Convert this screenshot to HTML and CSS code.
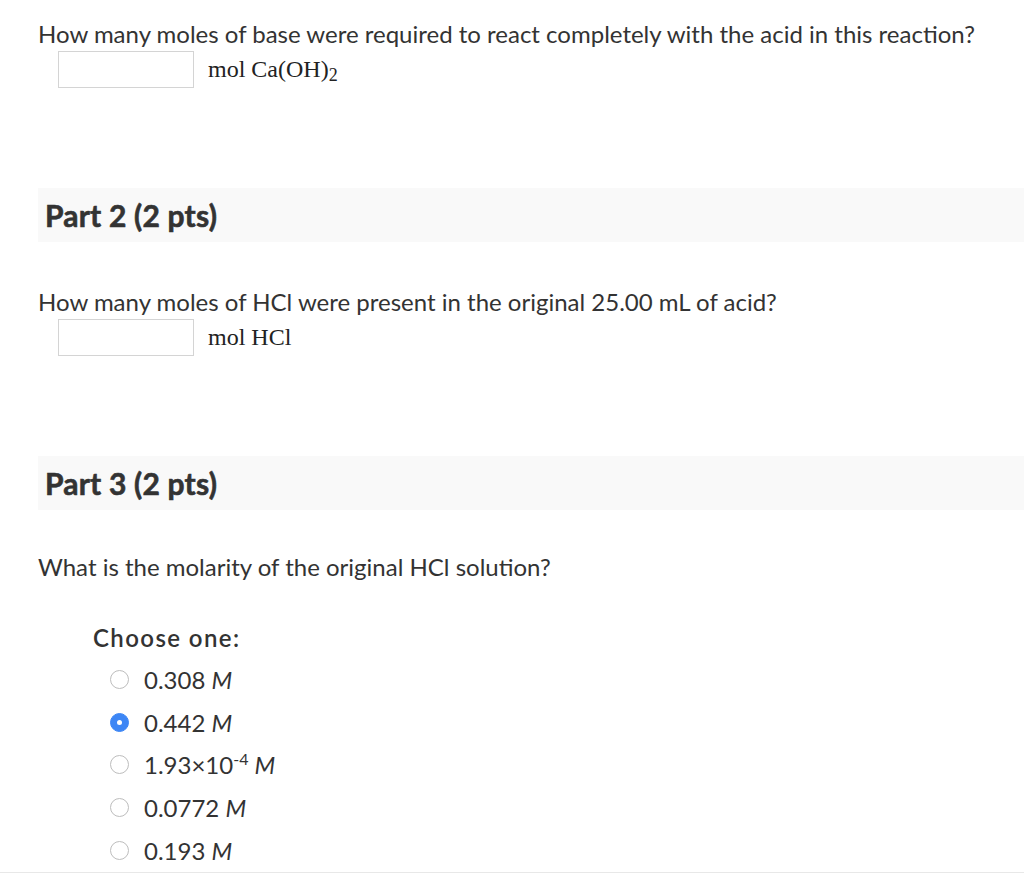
FILE: index.html
```html
<!DOCTYPE html>
<html>
<head>
<meta charset="utf-8">
<link rel="stylesheet" href="styles.css">
</head>
<body>
<div class="page">
  <p class="q q1">How many moles of base were required to react completely with the acid in this reaction?</p>
  <div class="answer">
    <span class="box"></span>
    <span class="unit">mol Ca(OH)<sub>2</sub></span>
  </div>

  <h2 class="part part2">Part 2 (2 pts)</h2>

  <p class="q q2">How many moles of HCl were present in the original 25.00 mL of acid?</p>
  <div class="answer">
    <span class="box"></span>
    <span class="unit">mol HCl</span>
  </div>

  <h2 class="part part3">Part 3 (2 pts)</h2>

  <p class="q q3">What is the molarity of the original HCl solution?</p>

  <div class="choices">
    <div class="choose">Choose one:</div>
    <div class="opt"><span class="radio"></span><span class="label">0.308 <i>M</i></span></div>
    <div class="opt"><span class="radio on"></span><span class="label">0.442 <i>M</i></span></div>
    <div class="opt"><span class="radio"></span><span class="label">1.93×10<sup>-4</sup> <i>M</i></span></div>
    <div class="opt"><span class="radio"></span><span class="label">0.0772 <i>M</i></span></div>
    <div class="opt"><span class="radio"></span><span class="label">0.193 <i>M</i></span></div>
  </div>
</div>
</body>
</html>
```
FILE: styles.css
```css
html, body {
  margin: 0;
  padding: 0;
  background: #fff;
}
.page {
  padding-left: 38px;
  font-family: Lato, "Open Sans", sans-serif;
  color: #333;
}
.q {
  margin: 0;
  font-size: 24px;
  line-height: 28px;
}
.q1 { margin-top: 20px; }
.q2 { margin-top: 46px; }
.q3 { margin-top: 43px; }
.answer {
  display: flex;
  align-items: center;
  margin-top: 3px;
  padding-left: 20px;
}
.box {
  width: 134px;
  height: 35px;
  border: 1px solid #d4d4d4;
  background: #fff;
}
.unit {
  margin-left: 14px;
  font-family: "Liberation Serif", serif;
  font-size: 24px;
  color: #222;
}
.unit sub {
  font-size: 18px;
  vertical-align: -4px;
  line-height: 0;
}
.part {
  margin: 100px 0 0 0;
  height: 54px;
  display: flex;
  align-items: center;
  padding-left: 7px;
  background: #f9f9f9;
  font-size: 30px;
  font-weight: 700;
  -webkit-text-stroke: 0.6px #333;
  letter-spacing: 0.2px;
  color: #333;
}
.choices {
  margin-top: 43px;
  border-bottom: 1px solid #e8e8e8;
  margin-left: -38px;
  padding-left: 93px;
}
.choose {
  font-size: 24px;
  line-height: 28px;
  font-weight: 600;
  letter-spacing: 1.4px;
  color: #333;
}
.opt {
  display: flex;
  align-items: center;
  height: 42.75px;
  padding-left: 17px;
}
.choose + .opt { margin-top: 6px; }
.radio {
  width: 17px;
  height: 17px;
  border: 1px solid #bdbdbd;
  border-radius: 50%;
  box-sizing: content-box;
  background: #fff;
  position: relative;
}
.radio.on {
  background: #3d86f5;
  border-color: #3d86f5;
}
.radio.on::after {
  content: "";
  position: absolute;
  left: 6px;
  top: 6px;
  width: 5px;
  height: 5px;
  border-radius: 50%;
  background: #fff;
}
.label {
  margin-left: 15px;
  font-size: 24px;
  color: #333;
}
.label i {
  font-style: italic;
}
.label sup {
  font-size: 16px;
  vertical-align: 9px;
  line-height: 0;
}
```
